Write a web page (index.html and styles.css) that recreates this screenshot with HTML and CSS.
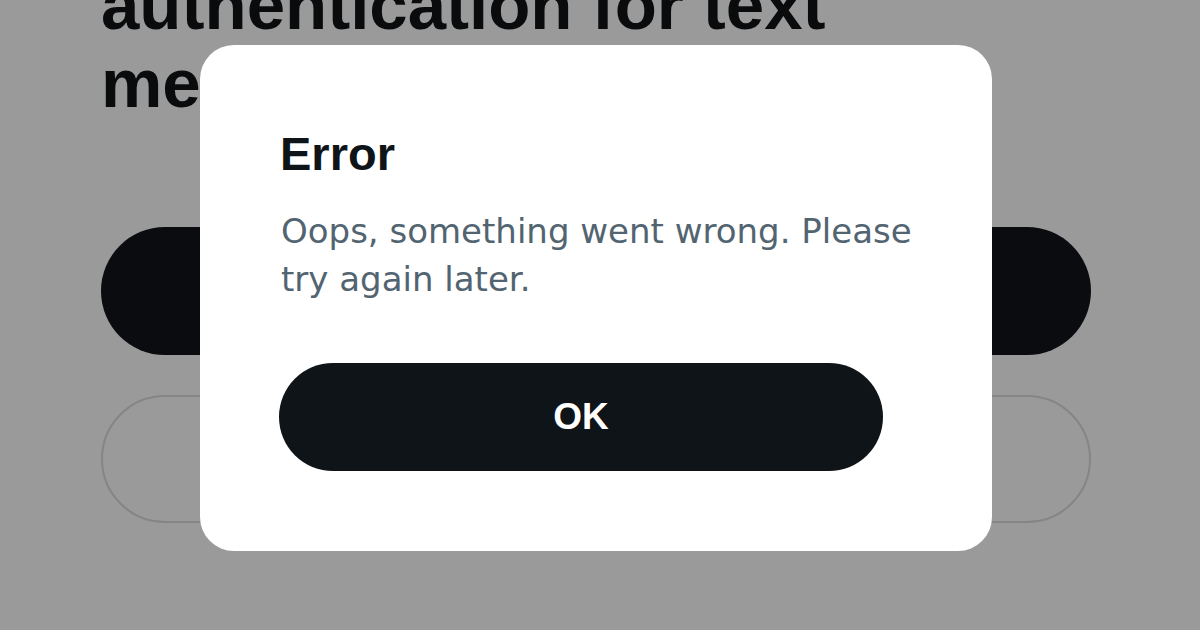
FILE: index.html
```html
<!DOCTYPE html>
<html lang="en">
<head>
<meta charset="utf-8">
<title>Error</title>
<link rel="stylesheet" href="styles.css">
</head>
<body>
<main class="page">
  <h1 class="title">authentication for text messages</h1>
  <div class="pill pill-dark"></div>
  <div class="pill pill-outline"></div>
</main>
<div class="modal" role="dialog">
  <h2 class="modal-title">Error</h2>
  <p class="modal-text">Oops, something went wrong. Please try again later.</p>
  <button class="modal-btn" type="button">OK</button>
</div>
</body>
</html>
```

FILE: styles.css
```css
html, body {
  margin: 0;
  padding: 0;
  width: 1200px;
  height: 630px;
  overflow: hidden;
  background: #9a9a9a;
  font-family: "Liberation Sans", Arial, sans-serif;
}

.page {
  padding: 0 109px 0 101px;
  display: flex;
  flex-direction: column;
}

.title {
  margin: -33px 0 0 0;
  font-size: 69px;
  line-height: 78px;
  font-weight: 700;
  color: #0a0b0d;
  width: 760px;
}

.pill {
  height: 128px;
  border-radius: 64px;
  box-sizing: border-box;
}

.pill-dark {
  margin-top: 104px;
  background: #0a0c0f;
}

.pill-outline {
  margin-top: 40px;
  border: 2px solid #858585;
}

.modal {
  position: absolute;
  left: 200px;
  top: 45px;
  width: 792px;
  height: 506px;
  box-sizing: border-box;
  background: #ffffff;
  border-radius: 34px;
  padding: 81px 60px 0 80px;
  display: flex;
  flex-direction: column;
  align-items: flex-start;
}

.modal-title {
  margin: 0;
  font-size: 47px;
  line-height: 56px;
  font-weight: 700;
  color: #0f1419;
}

.modal-text {
  margin: 25px 0 0 1px;
  font-family: "DejaVu Sans", "Liberation Sans", sans-serif;
  font-size: 34px;
  line-height: 48px;
  color: #536471;
}

.modal-btn {
  margin-top: 60px;
  margin-left: -1px;
  width: 604px;
  height: 108px;
  border: none;
  border-radius: 54px;
  background: #0f1419;
  color: #ffffff;
  font-family: "Liberation Sans", Arial, sans-serif;
  font-size: 37px;
  font-weight: 700;
  cursor: pointer;
}
```
